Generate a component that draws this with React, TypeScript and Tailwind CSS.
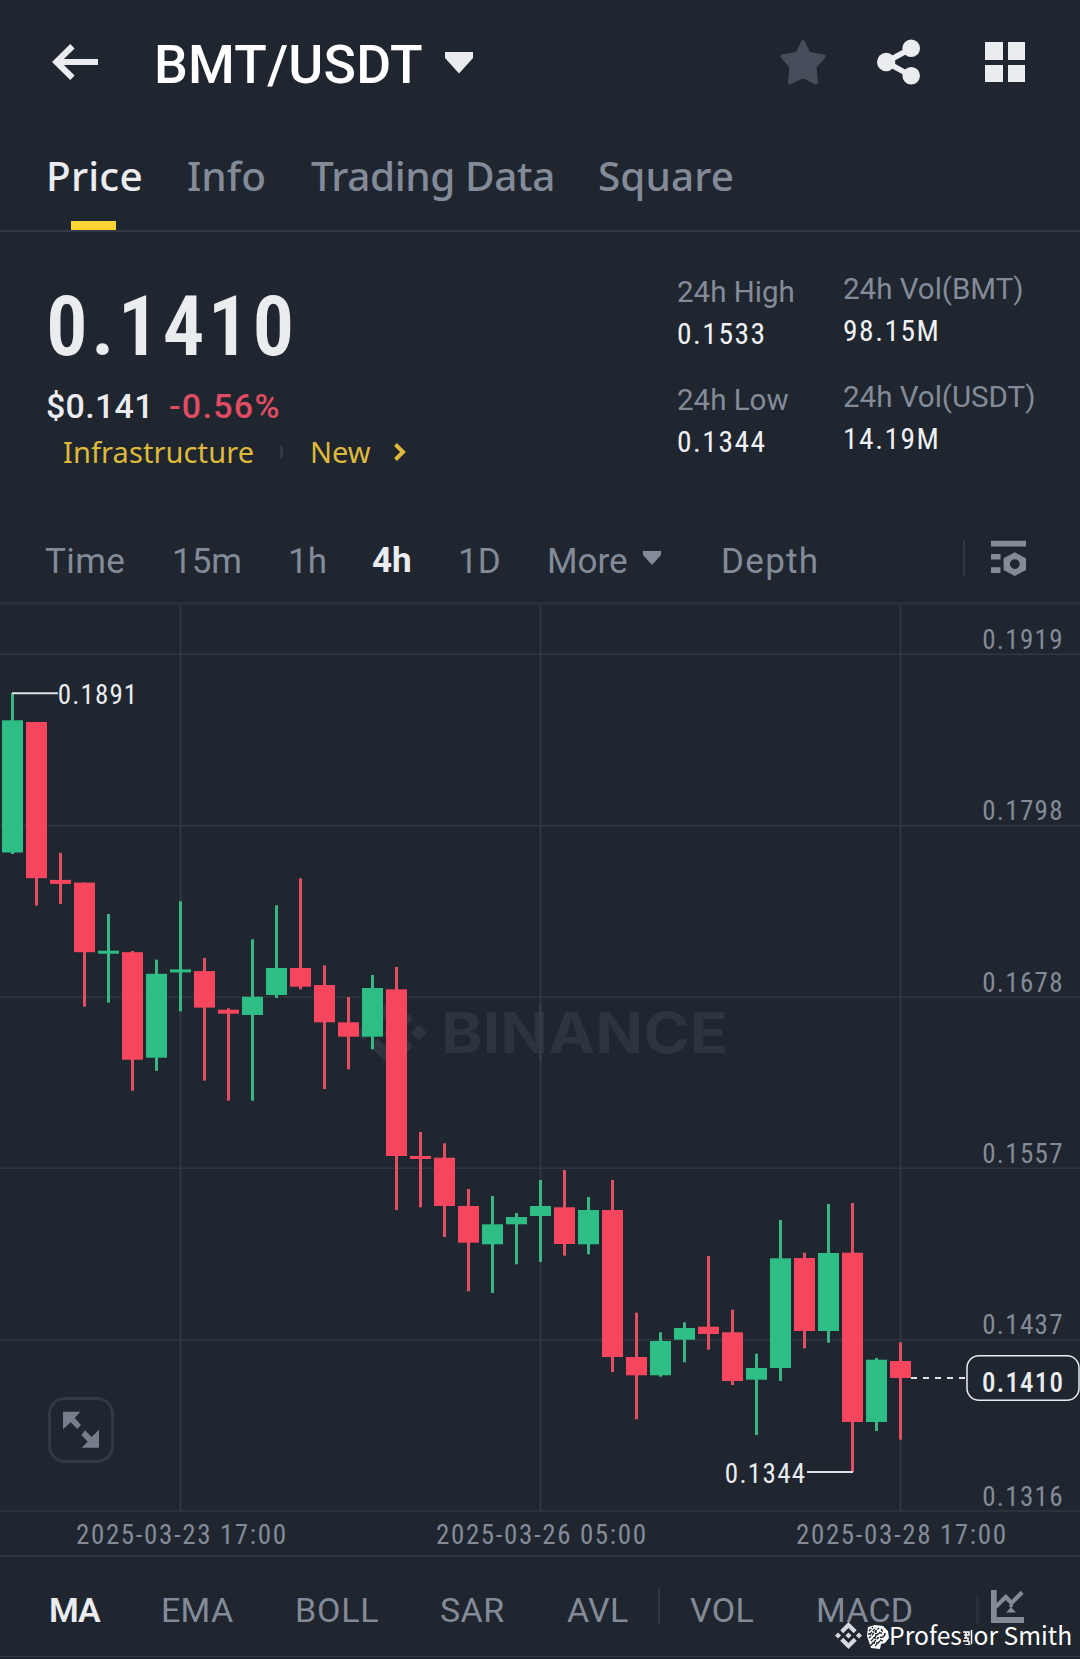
import { SiBinance } from 'react-icons/si';

const UP = '#2ebd85';
const DOWN = '#f6465d';
const GRID = '#303742';

// [up, high, bodyTop, bodyBottom, low] in chart space
const candles: [number, number, number, number, number][] = [
  [1, 693, 720.3, 852.5, 854],
  [0, 722, 722, 878.2, 905.6],
  [0, 852.8, 879.9, 883.9, 903.9],
  [0, 882.6, 882.6, 952.2, 1006.6],
  [1, 914, 950.7, 953.7, 1002.6],
  [0, 951, 952.2, 1059.7, 1090.8],
  [1, 959.6, 973.8, 1057.7, 1070.8],
  [1, 901.2, 969.4, 972.4, 1011.4],
  [0, 958, 971.1, 1007.6, 1080.6],
  [0, 1008.3, 1009.7, 1013.7, 1100.6],
  [1, 939.3, 996.7, 1015, 1100.7],
  [1, 905.3, 968, 995, 998],
  [0, 878.3, 968, 986.7, 989.3],
  [0, 965.3, 985, 1022.3, 1089],
  [0, 997, 1022.3, 1036.7, 1069.3],
  [1, 975, 988, 1036.7, 1049.3],
  [0, 967, 989.3, 1156, 1210],
  [0, 1132, 1156, 1159, 1207.3],
  [0, 1143.3, 1157.7, 1206, 1237],
  [0, 1189, 1206, 1242.7, 1291.3],
  [1, 1196, 1224.3, 1244.3, 1293],
  [1, 1213, 1217, 1224.3, 1264.3],
  [1, 1180, 1206, 1216, 1262],
  [0, 1170, 1207.3, 1244, 1255.7],
  [1, 1197, 1210, 1244.3, 1254.3],
  [0, 1180, 1210, 1357, 1372],
  [0, 1312.7, 1357, 1375.3, 1419.3],
  [1, 1332.3, 1341, 1375.3, 1376.7],
  [1, 1322.3, 1328, 1339.7, 1362.3],
  [0, 1256, 1326.7, 1334, 1349.7],
  [0, 1309.7, 1332.3, 1381, 1385],
  [1, 1353.7, 1368, 1379.7, 1435],
  [1, 1220, 1258.3, 1368, 1381],
  [0, 1252.7, 1258, 1331, 1348.3],
  [1, 1204, 1253, 1331, 1342.7],
  [0, 1203, 1252.7, 1422, 1472],
  [1, 1358, 1359.7, 1422, 1431],
  [0, 1342.3, 1361, 1378, 1439.7],
];

const priceAxis = [
  { label: '0.1919', y: 654.2 },
  { label: '0.1798', y: 825.6 },
  { label: '0.1678', y: 997 },
  { label: '0.1557', y: 1168.3 },
  { label: '0.1437', y: 1339.7 },
  { label: '0.1316', y: 1511 },
];

const timeAxis = [
  { label: '2025-03-23 17:00', x: 180.5 },
  { label: '2025-03-26 05:00', x: 540.5 },
  { label: '2025-03-28 17:00', x: 900.5 },
];

function Caret({ className }: { className: string }) {
  return (
    <svg viewBox="0 0 28 21.5" className={className} preserveAspectRatio="none" fill="currentColor">
      <path d="M0 0H28V6L14 21.5 0 6Z" />
    </svg>
  );
}

function Header() {
  return (
    <header className="flex h-[124px] items-center pl-[52px] pr-[55px] text-[#eaecef]">
      <svg viewBox="0 0 46 36" className="h-9 w-[46px]" fill="none" stroke="currentColor" strokeWidth="6.2">
        <path d="M20.4 2.2L4.4 18l16 15.8M5 18H46" />
      </svg>
      <h1 className="ml-[56px] pt-[5px] text-[53.5px] font-[550] leading-[60px] tracking-[0.25px] text-white">BMT/USDT</h1>
      <Caret className="ml-[22px] mt-[2px] h-[21.5px] w-7" />
      <div className="ml-auto flex items-center">
        <svg viewBox="0 0 46 46" className="size-[46px] text-[#474d5a]" fill="currentColor" stroke="currentColor" strokeWidth="4" strokeLinejoin="round">
          <path d="M23 3l5.5 11.8L43.5 17.5 34.5 27.7 36 43.5 23 37.3 10 43.5 11.5 27.7 2.5 17.5 17.5 14.8Z" />
        </svg>
        <svg viewBox="0 0 43 46" className="ml-[51px] h-[46px] w-[43px]" fill="currentColor" stroke="currentColor">
          <path d="M34 9.5L9 23l25 13.8" fill="none" strokeWidth="5.5" />
          <circle cx="34.2" cy="9.3" r="8.8" stroke="none" />
          <circle cx="9.2" cy="23" r="9.2" stroke="none" />
          <circle cx="34.2" cy="36.7" r="8.8" stroke="none" />
        </svg>
        <div className="ml-[65px] grid size-10 grid-cols-2 gap-[5px]">
          <span className="bg-[#eaecef]" />
          <span className="bg-[#eaecef]" />
          <span className="bg-[#eaecef]" />
          <span className="bg-[#eaecef]" />
        </div>
      </div>
    </header>
  );
}

function Tabs() {
  return (
    <nav className="flex h-[108px] border-b-2 border-[#323945] pl-[46px] font-['Noto_Sans',sans-serif] text-[40.5px] font-medium leading-[103px] text-[#848b98]">
      <span className="relative w-[141px] tracking-[0.2px] text-[#eaecef]">
        Price
        <span className="absolute bottom-0 left-[25px] h-[9px] w-[45px] bg-[#fcd535]" />
      </span>
      <span className="w-[124px]">Info</span>
      <span className="w-[287px] tracking-[-0.4px]">Trading Data</span>
      <span className="tracking-[0.1px]">Square</span>
    </nav>
  );
}

interface StatProps {
  label: string;
  value: string;
}

function Stat({ label, value }: StatProps) {
  return (
    <div className="text-[29.5px] leading-[42px]">
      <div className="text-[#848b98]">{label}</div>
      <div className="tracking-[1.5px] text-[#f0f1f4] [font-stretch:85%]">{value}</div>
    </div>
  );
}

function Summary() {
  return (
    <section className="flex h-[288px]">
      <div className="w-[677px] pl-[45px] pt-[55px]">
        <div className="pl-px text-[83px] font-semibold leading-[80px] tracking-[3.2px] text-[#eaecef] [font-stretch:85%]">0.1410</div>
        <div className="mt-[19px] flex text-[34px] font-medium leading-10">
          <span className="w-[124px] pl-px tracking-[0.3px] text-[#eaecef]">$0.141</span>
          <span className="tracking-[1.3px] text-[#e04c63]">-0.56%</span>
        </div>
        <div className="mt-[6px] flex items-center pl-[18px] font-['Noto_Sans',sans-serif] text-[29px] leading-10 text-[#dfb93b]">
          <span className="w-[217px] tracking-[0.1px]">Infrastructure</span>
          <span className="h-3 w-[3px] bg-[#323945]" />
          <span className="ml-[27px] w-[84px]">New</span>
          <svg viewBox="0 0 12 18" className="h-[18px] w-3" fill="none" stroke="currentColor" strokeWidth="4">
            <path d="M1.5 1.5L9 9l-7.5 7.5" />
          </svg>
        </div>
      </div>
      <div className="flex w-[166px] flex-col gap-6 pt-[39px]">
        <Stat label="24h High" value="0.1533" />
        <Stat label="24h Low" value="0.1344" />
      </div>
      <div className="flex flex-col gap-6 pt-9">
        <Stat label="24h Vol(BMT)" value="98.15M" />
        <Stat label="24h Vol(USDT)" value="14.19M" />
      </div>
    </section>
  );
}

function Intervals() {
  return (
    <nav className="flex h-[85px] items-center border-b-[3px] border-[#282f39] pl-[45px] text-[35px] leading-[82px] text-[#848b98]">
      <span className="w-[127px] pt-px tracking-[0.4px]">Time</span>
      <span className="w-[116px] pt-px">15m</span>
      <span className="w-[84px] pt-px">1h</span>
      <span className="w-[86px] font-bold text-[#eaecef]">4h</span>
      <span className="w-[89px] pt-px">1D</span>
      <span className="flex w-[174px] items-center pt-px">
        More
        <Caret className="mb-[7px] ml-[15px] h-[14px] w-[18px]" />
      </span>
      <span className="w-[242px] pt-px tracking-[1.3px]">Depth</span>
      <span className="mb-[7px] h-9 w-[2px] bg-[#323945]" />
      <svg viewBox="0 0 35 36" className="mb-[7px] ml-[26px] h-9 w-[35px]" fill="currentColor">
        <path d="M0 .8H35V6.5H0ZM0 14H9.5V19.5H0ZM0 27.3H9.5V33H0Z" />
        <path fillRule="evenodd" d="M23.8 12.3L35 18.2V30L23.8 36 12.6 30V18.2ZM23.8 19.2a4.9 4.9 0 1 0 0 9.8 4.9 4.9 0 0 0 0-9.8Z" />
      </svg>
    </nav>
  );
}

function Chart() {
  return (
    <div className="relative h-[952px] border-b-2 border-[#323945]">
      <svg viewBox="0 605 1080 950" className="block h-[950px] w-full">
        {priceAxis.map((p) => (
          <path key={p.label} d={`M0 ${p.y}H1080`} stroke={GRID} strokeWidth="1.6" />
        ))}
        {timeAxis.map((t) => (
          <path key={t.label} d={`M${t.x} 605V1511`} stroke={GRID} strokeWidth="2" />
        ))}

        <SiBinance x="356" y="997" size={71} color="#2d343e" />
        <text x="441" y="1053" fontSize="56" textLength="287" lengthAdjust="spacingAndGlyphs" className="fill-[#2d343e] font-['Inter',sans-serif] font-bold">
          BINANCE
        </text>
        <path d="M540.5 1005V1062" stroke="#373e49" strokeWidth="2" />

        {candles.map(([up, high, top, bottom, low], i) => {
          const x = 12.5 + i * 24;
          return (
            <g key={i} fill={up ? UP : DOWN}>
              <rect x={x - 1.5} y={high} width="3" height={low - high} fill={up ? '#3bb586' : '#e04f64'} />
              <rect x={x - 10.5} y={top} width="21" height={bottom - top} />
            </g>
          );
        })}

        <path d="M12 693.3H58M807 1472H853" stroke="#dfe1e5" strokeWidth="2" />
        <path d="M911 1378H966" stroke="#dfe1e5" strokeWidth="2" strokeDasharray="6 6" />
        <rect x="967" y="1355.7" width="112" height="44.5" rx="12" fill="#1f262f" stroke="#eaecef" strokeWidth="1.5" />

        <g fontSize="27" className="fill-[#eaecef] [font-stretch:85%]">
          <text x="57.7" y="703.8" textLength="79.5">0.1891</text>
          <text x="724.7" y="1482.7" textLength="80.5">0.1344</text>
          <text x="982" y="1391.9" textLength="81" className="font-medium">0.1410</text>
        </g>
        <g fontSize="27" className="fill-[#848b98] [font-stretch:85%]">
          {priceAxis.map((p) => (
            <text key={p.label} x="982.2" y={p.y - 5.5} textLength="80.3">{p.label}</text>
          ))}
          {timeAxis.map((t) => (
            <text key={t.label} x={t.x - 104.5} y="1543.7" textLength="210">{t.label}</text>
          ))}
        </g>
      </svg>
      <button className="absolute left-12 top-[792px] size-[66px] rounded-[17px] border-[3px] border-[#323945] text-[#777e8b]">
        <svg viewBox="33 46 180 180" className="size-[60px]" fill="currentColor">
          <path d="M69 81h52l-17 19 19 21-11 12-20-20-23 21ZM177 189h-52l18-18-19-20 11-14 20 20 22-22Z" />
        </svg>
      </button>
    </div>
  );
}

function Indicators() {
  return (
    <nav className="flex h-[100px] items-center border-b border-[#323945] pl-[49px] pt-[7px] text-[34px] leading-10 text-[#848b98]">
      <span className="w-[112px] font-semibold tracking-[-1px] text-[#eaecef]">MA</span>
      <span className="w-[134px] tracking-[0.3px]">EMA</span>
      <span className="w-[145px] tracking-[0.8px]">BOLL</span>
      <span className="w-[127px] tracking-[0.4px]">SAR</span>
      <span className="w-[91px] tracking-[0.3px]">AVL</span>
      <span className="mb-[9px] h-9 w-[2px] bg-[#323945]" />
      <span className="ml-[30px] w-[126px] tracking-[0.3px]">VOL</span>
      <span className="w-[160px] tracking-[0.2px]">MACD</span>
      <span className="h-7 w-[3px] bg-[#29303a]" />
      <svg viewBox="0 0 33 33" className="mb-[7px] ml-[12px] size-[33px]" fill="currentColor">
        <path d="M0 0H5.7V27H33V33H0ZM20 17l5 5.5H15Z" />
        <path d="M4 17.5L14.8 7l5.6 6L31.2 2.3" fill="none" stroke="currentColor" strokeWidth="4.2" />
        <path d="M17.500 15H22.500L20 18.500Z" />
      </svg>
    </nav>
  );
}

function Signature() {
  return (
    <div className="absolute left-[835px] top-[1618px] flex h-[34px] items-center font-['Noto_Sans_CJK_SC',sans-serif] text-[24.7px] leading-[34px] text-white">
      <SiBinance className="size-[27px] text-[#d6d8dc]" />
      <svg viewBox="0 0 22 24" className="ml-[5px] mt-[3px] h-6 w-[22px]">
        <path d="M1 2L8 0 16 1 21 6 22 13 18 18 14 19 13 24 4 23 2 17 0 11Z" fill="#ffffff" />
        <path
          d="M2 6l4-4M3 9l6-6M2 13L12 3M4 16l9-9M4 20l8-8M8 21l5-5M14 4l2 3M12 8h4M13 15l3 1M1 9h5M6 13h5M5 18h6M9 5v6M3 21l4-3"
          stroke="#1f262f"
          strokeWidth="1.4"
          strokeDasharray="3 1"
        />
        <path d="M13 12c3 1 5-1 5-4M14 20h3" fill="none" stroke="#1f262f" strokeWidth="1.6" />
      </svg>
      <span className="relative -top-px whitespace-nowrap">
        Professor Smith
        <svg viewBox="0 0 10 14" className="absolute left-[74px] top-[13px] h-[14px] w-[10px]">
          <path d="M0 0H10V14H0Z" fill="#1f262f" />
          <path d="M0 2H6V5H1M1 8H5V11H0M3 2V8M6 11V14M8.5 0V14" fill="none" stroke="#ffffff" strokeWidth="1.5" />
        </svg>
      </span>
    </div>
  );
}

export default function App() {
  return (
    <div className="relative h-[1659px] w-[1080px] overflow-hidden bg-[#1f262f] font-['Roboto',sans-serif]">
      <Header />
      <Tabs />
      <Summary />
      <Intervals />
      <Chart />
      <Indicators />
      <Signature />
    </div>
  );
}
